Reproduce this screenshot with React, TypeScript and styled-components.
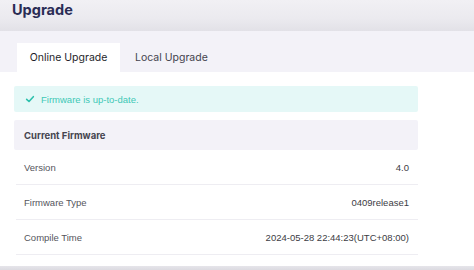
import React from 'react'
import styled, { createGlobalStyle } from 'styled-components'

const GlobalStyle = createGlobalStyle`
  html, body {
    margin: 0;
    padding: 0;
    background: #ffffff;
    font-family: Inter, "Liberation Sans", sans-serif;
  }
  #root {
    width: 474px;
    height: 270px;
    overflow: hidden;
  }
`

type FirmwareRow = { label: string, value: string }

const rows: FirmwareRow[] = [
  { label: 'Version', value: '4.0' },
  { label: 'Firmware Type', value: '0409release1' },
  { label: 'Compile Time', value: '2024-05-28 22:44:23(UTC+08:00)' },
]

function CheckIcon() {
  return (
    <svg width="10" height="10" viewBox="0 0 12 12">
      <path d="M2 6.4 L4.8 9 L10 3.2" fill="none" stroke="#2cc0ac" strokeWidth="1.9" strokeLinecap="round" strokeLinejoin="round" />
    </svg>
  )
}

export default function App() {
  return (
    <>
      <GlobalStyle />
      <Page>
        <Header>
          <Title>Upgrade</Title>
        </Header>
        <TabBar>
          <Tab active>Online Upgrade</Tab>
          <Tab>Local Upgrade</Tab>
        </TabBar>
        <Content>
          <Alert>
            <CheckIcon />
            <AlertText>Firmware is up-to-date.</AlertText>
          </Alert>
          <Card>
            <CardHeader>Current Firmware</CardHeader>
            {rows.map(r => (
              <Row key={r.label}>
                <Label>{r.label}</Label>
                <Value>{r.value}</Value>
              </Row>
            ))}
          </Card>
        </Content>
        <Footer />
      </Page>
    </>
  )
}

const Page = styled.div`
  width: 474px;
  height: 270px;
  display: flex;
  flex-direction: column;
  background: #ffffff;
`

const Header = styled.div`
  height: 31px;
  flex-shrink: 0;
  display: flex;
  align-items: flex-start;
  padding-left: 12px;
  background: linear-gradient(to bottom, #f1f0f4 0%, #ebeaef 60%, #e2e1e7 100%);
  box-sizing: border-box;
`

const Title = styled.h1`
  margin: 0;
  font-size: 14.5px;
  line-height: 19px;
  font-weight: 700;
  color: #2a2c55;
`

const TabBar = styled.div`
  height: 41px;
  flex-shrink: 0;
  display: flex;
  align-items: flex-end;
  padding-left: 17px;
  background: #f3f2f8;
  box-sizing: border-box;
`

const Tab = styled.div<{ active?: boolean }>`
  height: 29px;
  width: ${p => (p.active ? '103px' : 'auto')};
  padding: ${p => (p.active ? '0' : '0 14px 0 15px')};
  display: flex;
  align-items: center;
  justify-content: center;
  font-size: 10.5px;
  color: ${p => (p.active ? '#1f1f2a' : '#44444e')};
  background: ${p => (p.active ? '#ffffff' : 'transparent')};
`

const Content = styled.div`
  flex: 1;
  padding: 14px 0 0 14px;
  width: 404px;
`

const Alert = styled.div`
  height: 26px;
  display: flex;
  align-items: center;
  gap: 6px;
  padding-left: 11px;
  background: #e5f8f7;
  border-radius: 2px;
`

const AlertText = styled.span`
  font-family: "Liberation Sans", Arial, sans-serif;
  font-size: 9.5px;
  color: #3ec8b6;
`

const Card = styled.div`
  margin-top: 8px;
`

const CardHeader = styled.div`
  height: 30px;
  display: flex;
  align-items: center;
  padding-left: 10px;
  background: #f3f2f8;
  font-size: 9.5px;
  font-weight: 700;
  color: #45454f;
  border-radius: 2px;
`

const Row = styled.div`
  height: 34px;
  margin-left: 2px;
  display: flex;
  align-items: center;
  justify-content: space-between;
  padding: 0 9px 0 8px;
  border-bottom: 1px solid #eeedf2;
  font-family: "Liberation Sans", Arial, sans-serif;
  font-size: 9.5px;
  color: #55555c;
`

const Label = styled.span``

const Value = styled.span`
  color: #3c3c44;
`

const Footer = styled.div`
  height: 4px;
  margin-top: 2px;
  flex-shrink: 0;
  background: linear-gradient(to bottom, #e6e5ea, #dcdbe1);
`
